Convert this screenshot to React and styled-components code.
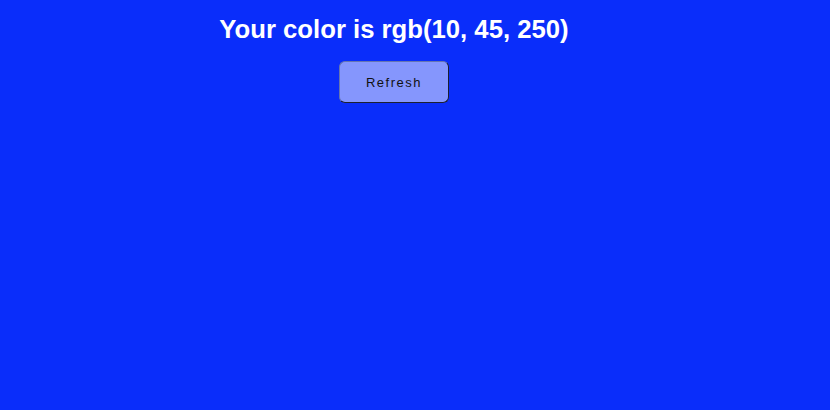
import React, { useState } from 'react'
import styled, { createGlobalStyle } from 'styled-components'

const GlobalStyle = createGlobalStyle`
html, body {
  margin: 0;
  padding: 0;
  height: 100%;
}
body {
  font-family: "Liberation Sans", Arial, sans-serif;
}
`

const Page = styled.div`
min-height: 410px;
background: ${props => props.color};
`

const Content = styled.div`
width: 788px;
display: flex;
flex-direction: column;
align-items: center;
padding-top: 14px;
`

const Title = styled.h1`
margin: 0;
font-size: 25.7px;
font-weight: bold;
color: #fff;
line-height: 30px;
`

const RefreshButton = styled.button`
margin-top: 17px;
width: 110px;
height: 42px;
background: rgba(255, 255, 255, 0.5);
border: 1px solid #1c2030;
border-top-color: #6675b0;
border-left-color: #6675b0;
border-radius: 6px;
font-family: "Liberation Sans", Arial, sans-serif;
font-size: 13px;
letter-spacing: 1.5px;
color: #111;
cursor: pointer;
`

const App = () => {
  const [rgb] = useState([10, 45, 250])
  const color = `rgb(${rgb.join(', ')})`

  return (
    <Page color={color}>
      <GlobalStyle />
      <Content>
        <Title>Your color is {color}</Title>
        <RefreshButton>Refresh</RefreshButton>
      </Content>
    </Page>
  )
}

export default App
